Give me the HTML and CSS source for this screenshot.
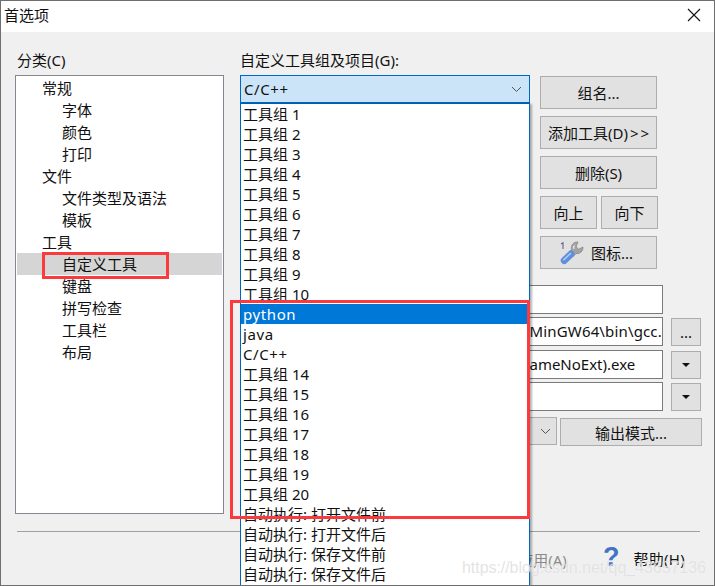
FILE: index.html
```html
<!DOCTYPE html>
<html lang="zh-CN">
<head>
<meta charset="utf-8">
<title>首选项</title>
<link rel="stylesheet" href="styles.css">
</head>
<body>
<div class="window">
  <header class="titlebar">
    <span>首选项</span>
    <svg class="close" width="14" height="14" viewBox="0 0 14 14"><path d="M1 1l12 12M13 1L1 13" stroke="#111" stroke-width="1.1" fill="none"/></svg>
  </header>
  <main class="main">
    <section class="left">
      <div class="label inset">分类(C)</div>
      <ul class="tree">
        <li class="l1">常规</li>
        <li class="l2">字体</li>
        <li class="l2">颜色</li>
        <li class="l2">打印</li>
        <li class="l1">文件</li>
        <li class="l2">文件类型及语法</li>
        <li class="l2">模板</li>
        <li class="l1">工具</li>
        <li class="l2 current">自定义工具</li>
        <li class="l2">键盘</li>
        <li class="l2">拼写检查</li>
        <li class="l2">工具栏</li>
        <li class="l2">布局</li>
      </ul>
    </section>
    <section class="right">
      <div class="label">自定义工具组及项目(G):</div>
      <div class="top">
        <div class="combo">
          <div class="combo-head">
            <span class="latin">C/C++</span>
            <svg width="11" height="7" viewBox="0 0 11 7"><path d="M1 1l4.5 4.5L10 1" stroke="#555" fill="none"/></svg>
          </div>
          <ul class="drop">
            <li>工具组 1</li><li>工具组 2</li><li>工具组 3</li><li>工具组 4</li><li>工具组 5</li>
            <li>工具组 6</li><li>工具组 7</li><li>工具组 8</li><li>工具组 9</li><li>工具组 10</li>
            <li class="picked latin">python</li><li class="latin">java</li><li class="latin">C/C++</li>
            <li>工具组 14</li><li>工具组 15</li><li>工具组 16</li><li>工具组 17</li><li>工具组 18</li><li>工具组 19</li><li>工具组 20</li>
            <li>自动执行: 打开文件前</li><li>自动执行: 打开文件后</li><li>自动执行: 保存文件前</li><li>自动执行: 保存文件后</li>
          </ul>
        </div>
        <div class="buttons">
          <button class="btn">组名...</button>
          <button class="btn">添加工具(D)<span class="gt">&gt;&gt;</span></button>
          <button class="btn">删除(S)</button>
          <div class="pair">
            <button class="btn half">向上</button>
            <button class="btn half">向下</button>
          </div>
          <button class="btn icon-btn">
            <svg width="24" height="24" viewBox="0 0 24 24">
              <path d="M1 3l2-1.2V8" stroke="#5a6a80" stroke-width="1.1" fill="none"/>
              <path d="M18 1a6 6 0 0 0-6.5 7.6l-3 3 4.5 4 3-3a6 6 0 0 0 7-6.600l-4.200 2.200-2.800-2.200z" fill="#a3a3a3" stroke="#8a8a8a" stroke-width=".8"/>
              <path d="M14.500 4.500a3 3 0 0 0-.5 3.500" stroke="#e8e8e8" stroke-width="1.300" fill="none"/>
              <path d="M11 13L4.300 19.500" stroke="#5f8edb" stroke-width="7" stroke-linecap="round"/>
              <path d="M10.500 12.500L3.800 18.800" stroke="#b5cdf3" stroke-width="1.500" stroke-linecap="round"/>
            </svg>
            <span>图标...</span>
          </button>
        </div>
      </div>
      <div class="form">
        <div class="row"><div class="input"></div></div>
        <div class="row"><div class="input"><span class="cmd">C:\MinGW64\bin\gcc.exe</span></div><button class="mini">...</button></div>
        <div class="row wide"><div class="input"><span class="arg">$(FileNameNoExt).exe</span></div><button class="mini"><i class="tri"></i></button></div>
        <div class="row"><div class="input"></div><button class="mini"><i class="tri"></i></button></div>
        <div class="row last">
          <div class="select"><svg width="11" height="7" viewBox="0 0 11 7"><path d="M1 1l4.5 4.500L10 1" stroke="#555" fill="none"/></svg></div>
          <button class="btn output">输出模式...</button>
        </div>
      </div>
    </section>
  </main>
  <div class="rule"></div>
  <footer class="footer">
    <span class="apply">应用(A)</span>
    <span class="help-mark">?</span>
    <span class="help">帮助(H)</span>
  </footer>
  <div class="mark mark-tool"></div>
  <div class="mark mark-list"></div>
  <div class="watermark">https://blog.csdn.net/qq_43657136</div>
</div>
</body>
</html>
```
FILE: styles.css
```css
* { box-sizing: border-box; }
html, body { margin: 0; padding: 0; }
body {
  width: 715px;
  height: 586px;
  overflow: hidden;
  font-family: "Noto Sans", "Noto Sans CJK SC", sans-serif;
  font-size: 15px;
  color: #111;
}
ul { list-style: none; margin: 0; padding: 0; }
button { font: inherit; color: inherit; padding: 0; }

.window {
  position: relative;
  width: 715px;
  height: 586px;
  border: 1px solid #6e6e6e;
  background: #f0f0f0;
  display: flex;
  flex-direction: column;
  overflow: hidden;
}
.titlebar {
  height: 31px;
  flex: none;
  background: #fff;
  display: flex;
  align-items: center;
  justify-content: space-between;
  padding: 0 13px 3px 3px;
  line-height: 26px;
}
.main {
  flex: none;
  height: 482px;
  display: flex;
  padding: 20px 0 0 14px;
}
.label { height: 18px; line-height: 16px; margin-bottom: 5px; }
.inset { padding-left: 2px; }
.left { width: 209px; flex: none; }
.tree {
  height: 439px;
  border: 1px solid #828790;
  background: #fff;
  padding-top: 1px;
}
.tree li { height: 22px; line-height: 22px; }
.l1 { padding-left: 26px; }
.l2 { padding-left: 46px; }
.tree .current { background: #d5d5d5; margin: 0 1px; padding-left: 45px; }

.right { margin-left: 16px; width: 462px; flex: none; }
.top { display: flex; gap: 10px; }
.combo { position: relative; width: 290px; flex: none; height: 29px; }
.combo-head {
  height: 29px;
  border: 1px solid #0067c0;
  border-bottom-width: 2px;
  background: #cce4f7;
  display: flex;
  align-items: center;
  justify-content: space-between;
  padding: 0 7px 0 3px;
}
.latin { letter-spacing: .6px; }
.drop {
  position: absolute;
  z-index: 2;
  left: 0;
  top: 29px;
  width: 290px;
  height: 490px;
  background: #fff;
  border: solid #0067c0;
  border-width: 0 1px;
  box-shadow: 2px 0 2px rgba(0, 0, 0, .3);
}
.drop li { height: 20px; line-height: 20px; padding-left: 2px; white-space: nowrap; }
.drop .picked { background: #0078d7; color: #fff; }

.buttons { width: 117px; flex: none; display: flex; flex-direction: column; gap: 7px; margin-top: 1px; }
.btn {
  height: 33px;
  background: #e1e1e1;
  border: 1px solid #adadad;
  white-space: nowrap;
}
.gt { letter-spacing: 2px; margin-left: 2px; margin-right: -2px; }
.pair { display: flex; gap: 4px; }
.half { width: 57px; flex: none; }
.icon-btn { display: flex; align-items: center; justify-content: center; gap: 7px; padding-right: 4px; }

.form { margin-top: 16px; }
.row { display: flex; height: 29px; margin-top: 3px; align-items: flex-end; }
.row:first-child { margin-top: 0; }
.row.wide { margin-top: 4px; }
.input {
  width: 423px;
  height: 29px;
  flex: none;
  border: 1px solid #7a7a7a;
  background: #fff;
  line-height: 26px;
  white-space: nowrap;
  overflow: hidden;
}
.cmd { display: inline-block; margin-left: 269px; letter-spacing: .15px; }
.arg { display: inline-block; margin-left: 240px; }
.mini {
  width: 30px;
  height: 28px;
  margin-left: 8px;
  flex: none;
  background: #e1e1e1;
  border: 1px solid #adadad;
  line-height: 22px;
  display: flex;
  align-items: center;
  justify-content: center;
}
.tri {
  width: 0;
  height: 0;
  border: 4px solid transparent;
  border-top: 4px solid #111;
  border-bottom: 0;
}
.row.last { margin-top: 6px; height: 29px; gap: 3px; align-items: flex-start; }
.select {
  width: 317px;
  height: 28px;
  flex: none;
  background: #e1e1e1;
  border: 1px solid #adadad;
  display: flex;
  align-items: center;
  justify-content: flex-end;
  padding-right: 5px;
}
.output { width: 142px; height: 28px; margin-top: 1px; }

.rule { height: 1px; flex: none; margin: 17px 14px 0 16px; background: #a0a0a0; }
.footer {
  position: relative;
  flex: none;
  height: 52px;
  display: flex;
  align-items: center;
  justify-content: flex-end;
  padding: 2px 29px 0 0;
}
.apply { color: #8a8a8a; margin-right: 36px; }
.help-mark {
  font-family: "Liberation Sans", sans-serif;
  font-weight: 700;
  font-size: 27px;
  line-height: 30px;
  color: #3f74c9;
  margin-right: 14px;
  margin-top: -4px;
}
.help { line-height: 20px; letter-spacing: .3px; }

.mark { position: absolute; z-index: 3; border: 3px solid #fb3a3e; pointer-events: none; }
.mark-tool { left: 41px; top: 251px; width: 127px; height: 27px; }
.mark-list { left: 229px; top: 299px; width: 300px; height: 219px; }
.watermark {
  position: absolute;
  z-index: 4;
  left: 461px;
  top: 557px;
  font-family: "Liberation Sans", sans-serif;
  font-size: 16px;
  line-height: 20px;
  letter-spacing: -.05px;
  color: rgba(200, 200, 200, .5);
  text-shadow: 0 0 1px rgba(255, 255, 255, .9);
  white-space: nowrap;
}
```
